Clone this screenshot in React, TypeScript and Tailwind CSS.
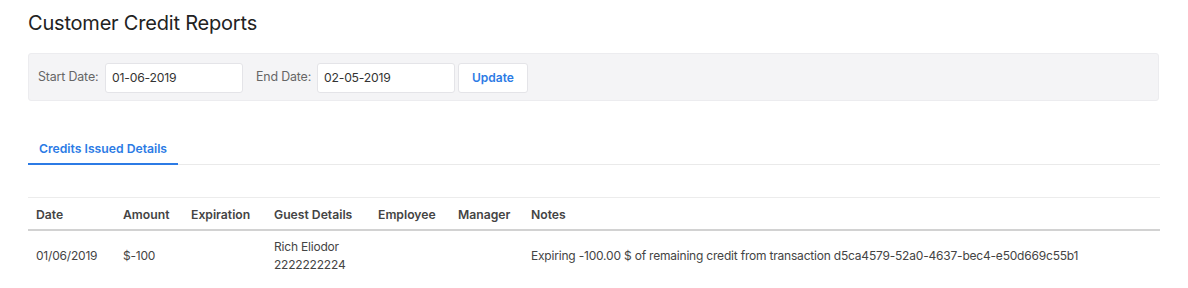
import React from 'react';

const columns = [
  { label: 'Date', w: 'w-[87px]' },
  { label: 'Amount', w: 'w-[68px]' },
  { label: 'Expiration', w: 'w-[83px]' },
  { label: 'Guest Details', w: 'w-[104px]' },
  { label: 'Employee', w: 'w-[80px]' },
  { label: 'Manager', w: 'w-[73px]' },
  { label: 'Notes', w: '' },
];

const App: React.FC = () => {
  return (
    <div className="w-full min-h-[288px] bg-white px-[28px] pt-[10px] font-['Inter',sans-serif] text-[12px] tracking-[-0.2px] text-[#333]">
      {/* Title */}
      <h1 className="text-[20px] tracking-[-0.2px] font-normal leading-[26px] text-[#222]">Customer Credit Reports</h1>

      {/* Filter bar */}
      <div className="mt-[17px] h-[48px] w-[1131px] bg-[#f4f4f6] border border-[#ececef] rounded-[3px] flex items-center pl-[9px] pt-[1px]">
        <span className="shrink-0 whitespace-nowrap w-[61px] text-[12.4px] tracking-[-0.15px] text-[#666]">Start Date:</span>
        <input
          defaultValue="01-06-2019"
          className="shrink-0 ml-[6px] w-[138px] h-[30px] bg-white border border-[#e4e4e8] rounded-[3px] px-[6px] text-[12.2px] text-[#333] outline-none"
        />
        <span className="shrink-0 whitespace-nowrap ml-[13px] w-[53px] text-[12.4px] tracking-[-0.15px] text-[#666]">End Date:</span>
        <input
          defaultValue="02-05-2019"
          className="shrink-0 ml-[8px] w-[138px] h-[30px] bg-white border border-[#e4e4e8] rounded-[3px] px-[6px] text-[12.2px] text-[#333] outline-none"
        />
        <button className="shrink-0 ml-[3px] w-[70px] h-[30px] bg-white border border-[#e4e4e8] rounded-[3px] text-[12px] tracking-normal font-semibold text-[#2c7be5]">
          Update
        </button>
      </div>

      {/* Tabs */}
      <div className="mt-[27px] w-[1132px] border-b border-[#eaeaea] flex">
        <div className="px-[11px] pt-[12px] pb-[5px] border-b-2 border-[#2c7be5] -mb-px text-[12.2px] tracking-normal font-semibold text-[#2c7be5]">
          Credits Issued Details
        </div>
      </div>

      {/* Table */}
      <table className="mt-[32px] w-[1132px] border-collapse">
        <thead>
          <tr className="border-t border-[#ececec] border-b-2 border-b-[#d2d2d2]">
            {columns.map((c) => (
              <th key={c.label} className={`${c.w} h-[32px] text-left pl-[8px] pt-[3px] text-[12.2px] tracking-normal font-semibold text-[#444]`}>
                {c.label}
              </th>
            ))}
          </tr>
        </thead>
        <tbody>
          <tr className="text-[#444]">
            <td className="pl-[8px] h-[52px]">01/06/2019</td>
            <td className="pl-[8px]">$-100</td>
            <td className="pl-[8px]"></td>
            <td className="pl-[8px] leading-[18px]">
              <div>Rich Eliodor</div>
              <div>2222222224</div>
            </td>
            <td className="pl-[8px]"></td>
            <td className="pl-[8px]"></td>
            <td className="pl-[8px]">Expiring -100.00 $ of remaining credit from transaction d5ca4579-52a0-4637-bec4-e50d669c55b1</td>
          </tr>
        </tbody>
      </table>
    </div>
  );
};

export default App;
